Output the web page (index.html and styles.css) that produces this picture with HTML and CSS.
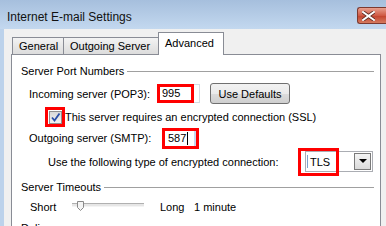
FILE: index.html
```html
<!DOCTYPE html>
<html lang="en">
<head>
  <meta charset="UTF-8" />
  <title>Internet E-mail Settings</title>
  <link rel="stylesheet" href="styles.css">
</head>
<body>
  <div class="window">
    <div class="titlebar">
      <span class="title">Internet E-mail Settings</span>
      <button class="close">
        <svg width="13" height="10" viewBox="0 0 13 10">
          <path d="M1 1 L12 9 M12 1 L1 9" stroke="#5a2a22" stroke-width="3.6" stroke-linecap="square"/>
          <path d="M1 1 L12 9 M12 1 L1 9" stroke="#fff" stroke-width="2" stroke-linecap="square"/>
        </svg>
      </button>
    </div>

    <div class="frame">
      <div class="tabs">
        <div class="tab">General</div>
        <div class="tab">Outgoing Server</div>
        <div class="tab active">Advanced</div>
      </div>

      <div class="panel">
        <div class="group-head"><span>Server Port Numbers</span><i></i></div>

        <div class="row row-in">
          <span class="label w-in">Incoming server (POP3):</span>
          <span class="field">
            <span class="mark mark-in"></span>995
          </span>
          <button class="btn">Use Defaults</button>
        </div>

        <div class="row row-check">
          <span class="mark-check"><span class="checkbox">
            <svg width="11" height="11" viewBox="0 0 11 11"><path d="M2 5.5 L4.5 8.5 L9.5 1.5" stroke="#2a4fa8" stroke-width="1.8" fill="none"/></svg>
          </span></span>
          <span class="label">This server requires an encrypted connection (SSL)</span>
        </div>

        <div class="row row-out">
          <span class="label w-out">Outgoing server (SMTP):</span>
          <span class="field field-out">587<span class="caret"></span></span>
        </div>

        <div class="row row-enc">
          <span class="label w-enc">Use the following type of encrypted connection:</span>
          <span class="combo">
            <span class="mark mark-tls"></span>
            <span class="combo-text"><span class="caret blue"></span>TLS</span>
            <span class="drop">
              <svg width="8" height="5" viewBox="0 0 8 5"><path d="M0 0 H8 L4 4 Z" fill="#000"/></svg>
            </span>
          </span>
        </div>

        <div class="group-head head2"><span>Server Timeouts</span><i></i></div>

        <div class="row row-slide">
          <span class="label w-short">Short</span>
          <span class="slider">
            <span class="track"></span>
            <svg class="thumb" width="7" height="10" viewBox="0 0 7 10"><path d="M0.5 0.5 H6.5 V6.5 L3.5 9.5 L0.5 6.5 Z" fill="#f4f4f4" stroke="#8a8a8a"/></svg>
          </span>
          <span class="label w-long">Long</span>
          <span class="label">1 minute</span>
        </div>

        <div class="group-head head3"><span>Delivery</span><i></i></div>
      </div>
    </div>
  </div>
</body>
</html>
```

FILE: styles.css
```css
html, body {
  margin: 0;
  padding: 0;
}

body {
  width: 386px;
  height: 226px;
  overflow: hidden;
  font-family: "Liberation Sans", Arial, sans-serif;
  font-size: 11px;
  color: #000;
}

.window {
  height: 226px;
  background: linear-gradient(90deg, #bcd2eb 0, #bcd2eb 4px, #f0f0f0 4px);
  display: flex;
  flex-direction: column;
}

.titlebar {
  height: 29px;
  flex: none;
  display: flex;
  align-items: flex-start;
  justify-content: space-between;
  background: linear-gradient(#a6bfdd, #c3d8ef);
}

.title {
  font-size: 12px;
  padding: 10px 0 0 7px;
  color: #111;
}

.close {
  margin-top: 7px;
  width: 29px;
  height: 17px;
  padding: 0 0 0 4px;
  border: 1px solid #7d3a30;
  border-right: none;
  border-radius: 3px 0 0 3px;
  background: linear-gradient(#e8a08f, #cf5a45 50%, #c2412c 51%, #d57a5e);
  display: flex;
  align-items: center;
  justify-content: flex-start;
}

.frame {
  padding-left: 11px;
  padding-right: 5px;
  flex: 1;
  display: flex;
  flex-direction: column;
}

.tabs {
  display: flex;
  align-items: flex-end;
  height: 21px;
  margin-top: 4px;
  position: relative;
  z-index: 1;
  padding-left: 1px;
}

.tab {
  height: 16px;
  line-height: 16px;
  padding: 0 6px;
  border: 1px solid #898c95;
  border-bottom: none;
  background: linear-gradient(#f3f3f3, #dcdcdc);
  margin-right: -1px;
}

.tab:nth-child(1) {
  width: 38px;
}

.tab:nth-child(2) {
  width: 82px;
}

.tab.active {
  height: 21px;
  line-height: 19px;
  width: 52px;
  background: #fff;
  margin-bottom: -1px;
  padding-top: 1px;
}

.panel {
  flex: 1;
  background: #fff;
  border: 1px solid #898c95;
  border-bottom: none;
}

.group-head {
  height: 18px;
  margin-top: 7px;
  padding-left: 9px;
  margin-right: 6px;
  display: flex;
  align-items: center;
  gap: 3px;
}

.group-head i {
  flex: 1;
  border-top: 1px solid #a0a0a0;
  margin-top: 1px;
}

.head2 {
  margin-top: 6px;
}

.head3 {
  margin-top: 3px;
}

.row {
  display: flex;
  align-items: center;
}

.label {
  white-space: nowrap;
}

.row-in {
  height: 21px;
  margin-top: 3px;
  padding-left: 17px;
}

.w-in {
  width: 128px;
}

.field {
  position: relative;
  width: 37px;
  height: 17px;
  border: 1px solid #d5dbe3;
  padding-left: 4px;
  line-height: 17px;
  background: #fff;
}

.mark {
  position: absolute;
  border: 3px solid #f00;
}

.mark-in {
  left: -1px;
  top: -1px;
  width: 31px;
  height: 13px;
}

.btn {
  margin-left: 10px;
  width: 80px;
  height: 21px;
  padding: 0;
  font: inherit;
  color: #000;
  border: 1px solid #707070;
  border-radius: 3px;
  background: linear-gradient(#f2f2f2, #ebebeb 50%, #dddddd 51%, #cfcfcf);
}

.row-check {
  height: 20px;
  margin-top: 3px;
  padding-left: 33px;
}

.mark-check {
  width: 14px;
  height: 14px;
  border: 3px solid #f00;
  display: flex;
  align-items: center;
  justify-content: center;
}

.checkbox {
  width: 11px;
  height: 11px;
  border: 1px solid #8f8f8f;
  background: linear-gradient(#d8d8d8, #f2f2f2);
  display: flex;
}

.row-out {
  height: 22px;
  padding-left: 17px;
}

.w-out {
  width: 133px;
}

.field-out {
  width: 28px;
  height: 15px;
  border: 3px solid #f00;
  box-shadow: inset -2px 0 0 #c6d8ee;
  padding-left: 3px;
  line-height: 15px;
  display: flex;
  align-items: center;
}

.caret {
  display: inline-block;
  width: 1px;
  height: 13px;
  background: #000;
  margin-left: 1px;
}

.caret.blue {
  background: #7da2ce;
  margin: 0 2px 0 0;
}

.row-enc {
  height: 21px;
  margin-top: 2px;
  padding-left: 36px;
}

.w-enc {
  width: 257px;
}

.combo {
  position: relative;
  width: 66px;
  height: 19px;
  border: 1px solid #abadb3;
  display: flex;
  align-items: center;
  justify-content: space-between;
}

.combo-text {
  display: flex;
  align-items: center;
  padding-left: 1px;
}

.mark-tls {
  left: -8px;
  top: -4px;
  width: 35px;
  height: 22px;
}

.drop {
  width: 15px;
  height: 15px;
  margin-right: 1px;
  border: 1px solid #7a7a7a;
  background: linear-gradient(#f4f4f4, #dadada);
  display: flex;
  align-items: center;
  justify-content: center;
}

.row-slide {
  height: 18px;
  margin-top: 2px;
  padding-left: 18px;
}

.w-short {
  width: 42px;
}

.slider {
  position: relative;
  width: 72px;
  height: 18px;
  margin-right: 16px;
}

.track {
  position: absolute;
  left: 0;
  right: 0;
  top: 5px;
  height: 2px;
  border-top: 1px solid #b0b0b0;
  border-bottom: 1px solid #f4f4f4;
  background: #e6e6e6;
}

.thumb {
  position: absolute;
  left: 5px;
  top: 3px;
}

.w-long {
  width: 34px;
}
```
